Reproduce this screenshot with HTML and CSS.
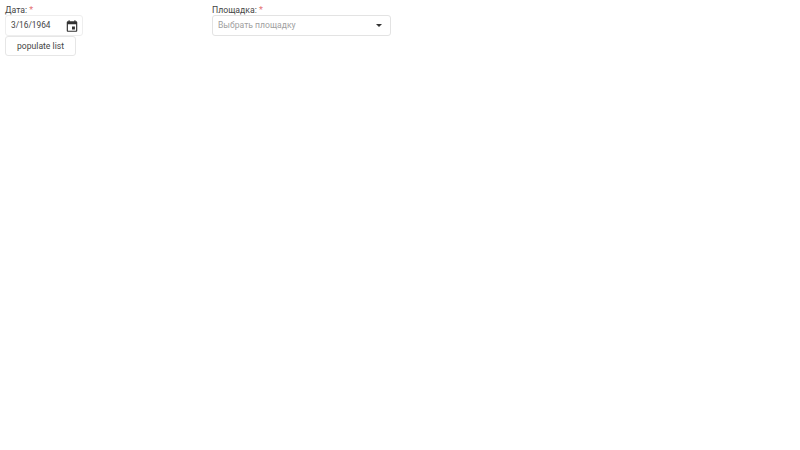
FILE: index.html
```html
<!DOCTYPE html>
<html lang="en">
<head>
  <meta charset="UTF-8" />
  <title>Площадка</title>
  <link rel="stylesheet" href="styles.css">
</head>
<body>

<div class="filters">
  <div class="field date-field">
    <label class="label">Дата: <span class="req">*</span></label>
    <div class="control date-control">
      <span class="value">3/16/1964</span>
      <svg class="calendar" width="14" height="14" viewBox="0 0 24 24">
        <path fill="#333" d="M19 4h-1V2h-2v2H8V2H6v2H5c-1.100 0-2 .9-2 2v14c0 1.100.9 2 2 2h14c1.100 0 2-.9 2-2V6c0-1.100-.9-2-2-2zm0 16H5V9h14v11zm-7-7h5v5h-5z"/>
      </svg>
    </div>
    <button class="btn">populate list</button>
  </div>

  <div class="field place-field">
    <label class="label">Площадка: <span class="req">*</span></label>
    <div class="control place-control">
      <span class="placeholder">Выбрать площадку</span>
      <span class="caret"></span>
    </div>
  </div>
</div>

</body>
</html>
```

FILE: styles.css
```css
html, body {
  margin: 0;
  padding: 0;
  background: #fff;
  color: #444;
  font-family: Roboto, 'Liberation Sans', sans-serif;
  font-size: 9px;
}

.filters {
  display: flex;
  align-items: flex-start;
  padding: 5px 0 0 5px;
}

.field {
  display: flex;
  flex-direction: column;
  align-items: flex-start;
}

.date-field {
  width: 207px;
}

.label {
  height: 10px;
  line-height: 10px;
  font-size: 8.7px;
  color: #444;
}

.req {
  color: #e57373;
  font-size: 9px;
}

.control {
  display: flex;
  align-items: center;
  justify-content: space-between;
  box-sizing: border-box;
  height: 21px;
  background: #fff;
  border: 1px solid #e6e6e6;
  border-radius: 3px;
  padding: 0 3px 2px 5px;
}

.date-control {
  width: 78px;
  border-color: #eee;
}

.place-control {
  width: 179px;
  padding-right: 7px;
  border-color: #e3e3e3;
}

.value {
  font-size: 8.3px;
  color: #444;
}

.placeholder {
  font-size: 8.6px;
  color: #a0a0a0;
}

.calendar {
  display: block;
  margin-top: 3px;
}

.caret {
  width: 0;
  height: 0;
  border-left: 3.5px solid transparent;
  border-right: 3.5px solid transparent;
  border-top: 3.5px solid #333;
  margin-top: 2px;
  margin-right: 1px;
}

.btn {
  box-sizing: border-box;
  width: 71px;
  height: 20px;
  padding: 0;
  background: #fff;
  border: 1px solid #e6e6e6;
  border-radius: 3px;
  color: #444;
  font-family: inherit;
  font-size: 8.6px;
}
```
